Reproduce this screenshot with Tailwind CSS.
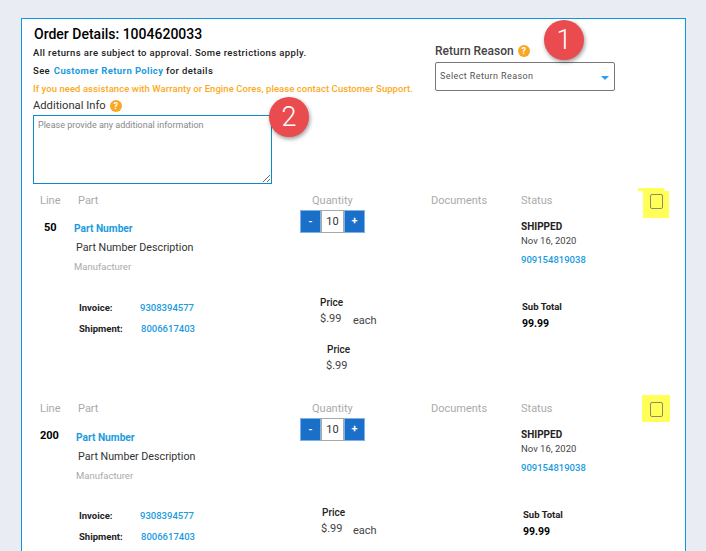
<!DOCTYPE html>
<html lang="en">
<head>
  <meta charset="UTF-8">
  <title>Order Details</title>
  <script src="https://cdn.jsdelivr.net/npm/@tailwindcss/browser@4"></script>
</head>
<body class="bg-[#e9edf3] h-[551px] overflow-hidden font-['Roboto',sans-serif] text-[#222]">
  <div class="relative ml-[21px] mt-[18px] w-[665px] h-[540px] bg-white border border-[#0b98de] border-b-0">

    <!-- top section -->
    <div class="flex h-[171px]">
      <div class="w-[413px] pl-[11px] shrink-0">
        <h1 class="mt-[7px] ml-[1px] text-[14px] leading-[17px] font-medium text-black">Order Details: 1004620033</h1>
        <p class="mt-[3px] text-[9.5px] leading-[14px] font-medium tracking-[0.38px]">All returns are subject to approval. Some restrictions apply.</p>
        <p class="mt-[4px] text-[9.5px] leading-[14px] font-medium tracking-[0.38px]">See <a class="ml-[1px] text-[#1a9be0] font-bold">Customer Return Policy</a> for details</p>
        <p class="mt-[4px] text-[9.5px] leading-[14px] font-medium tracking-[0.06px] text-[#fbaa1c] whitespace-nowrap">If you need assistance with Warranty or Engine Cores, please contact Customer Support.</p>
        <div class="mt-[2px] flex items-center gap-[4px] text-[11.2px] leading-[16px] text-[#333]">
          Additional Info
          <span class="w-[12px] h-[12px] rounded-full bg-[#f9a825] text-white text-[9px] leading-[12px] font-bold text-center">?</span>
        </div>
        <textarea rows="4" placeholder="Please provide any additional information" class="block mt-[1px] w-[239px] h-[69px] border border-[#0f8ac9] px-[4px] pt-[3px] text-[9px] leading-[12px] placeholder:text-[#888] outline-none"></textarea>
      </div>
      <div class="pt-[24px]">
        <div class="flex items-center gap-[4px] text-[12px] leading-[16px] font-medium text-[#444]">
          Return Reason
          <span class="w-[12px] h-[12px] rounded-full bg-[#f9a825] text-white text-[9px] leading-[12px] font-bold text-center">?</span>
        </div>
        <div class="mt-[3px] w-[180px] h-[29px] border border-[#777] rounded-[2px] flex items-center justify-between pl-[4px] pr-[5px] text-[9px] text-[#555] tracking-[0.4px]">
          Select Return Reason
          <span class="w-0 h-0 mt-[2px] border-x-[4px] border-x-transparent border-t-[4px] border-t-[#2a9df4]"></span>
        </div>
      </div>
    </div>

    <!-- line 50 -->
    <section class="flex h-[208px] text-[12px]">
      <div class="w-[278px] shrink-0">
        <div class="flex text-[#aaa] text-[11px] leading-[16px] pl-[18px] pt-[3px]"><span class="w-[38px]">Line</span><span>Part</span></div>
        <div class="flex mt-[12px]">
          <span class="w-[52px] pl-[22px] text-[11px] leading-[14px] font-bold text-black">50</span>
          <div class="mt-[1px]">
            <a class="block text-[10.2px] leading-[14px] font-bold text-[#1a9be0]">Part Number</a>
            <p class="mt-[5px] ml-[2px] text-[10.7px] leading-[14px] text-[#333]">Part Number Description</p>
            <p class="mt-[6px] text-[9.5px] leading-[12px] text-[#aaa]">Manufacturer</p>
          </div>
        </div>
        <div class="mt-[28px] ml-[57px] grid grid-cols-[61px_1fr] gap-y-[7px] text-[9.5px] leading-[14px]">
          <span class="font-bold">Invoice:</span><a class="text-[#1a9be0] font-medium">9308394577</a>
          <span class="font-bold">Shipment:</span><a class="ml-[1px] text-[#1a9be0] font-medium">8006617403</a>
        </div>
      </div>
      <div class="w-[131px] shrink-0">
        <div class="pl-[12px] pt-[3px] text-[#aaa] text-[11px] leading-[16px]">Quantity</div>
        <div class="flex h-[23px] w-[65px] mt-[1px]">
          <button class="w-[21px] bg-[#1a6fc9] border border-[#7fb0e6] text-white text-[10px] font-bold">-</button>
          <span class="w-[23px] border border-[#aaa] text-[11px] leading-[21px] text-center text-[#333]">10</span>
          <button class="w-[21px] bg-[#1a6fc9] border border-[#7fb0e6] text-white text-[11px] font-bold">+</button>
        </div>
        <div class="mt-[63px] ml-[20px] text-[10px] leading-[14px] font-medium">Price</div>
        <div class="mt-[2px] ml-[20px] flex text-[11px] leading-[14px] text-[#444]"><span class="w-[33px]">$.99</span><span class="mt-[2px]">each</span></div>
        <div class="mt-[15px] ml-[27px] text-[10px] leading-[14px] font-medium">Price</div>
        <div class="mt-[2px] ml-[26px] text-[11px] leading-[14px] text-[#444]">$.99</div>
      </div>
      <div class="w-[90px] shrink-0 pt-[3px] text-[#aaa] text-[11px] leading-[16px]">Documents</div>
      <div class="w-[120px] shrink-0">
        <div class="pt-[3px] text-[#aaa] text-[11px] leading-[16px]">Status</div>
        <div class="mt-[11px] text-[10px] leading-[14px] font-bold text-[#222]">SHIPPED</div>
        <div class="text-[9.5px] leading-[14px] text-[#444]">Nov 16, 2020</div>
        <a class="block mt-[5px] text-[9.5px] leading-[14px] text-[#1a9be0] font-medium">909154819038</a>
        <div class="mt-[33px] ml-[1px] text-[9.5px] leading-[14px] font-bold">Sub Total</div>
        <div class="mt-[3px] ml-[1px] text-[10.5px] leading-[14px] font-bold text-black">99.99</div>
      </div>
      <div class="relative w-[26px] h-[27px] mt-[1px] ml-[2px] bg-[#ffff57] pl-[7px] pt-[3px]">
        <span class="absolute -top-[3px] -left-[5px] w-[26px] h-[3px] bg-[#ffff57]"></span>
        <span class="block w-[13px] h-[15px] rounded-[2px] border-[1.5px] border-[#8a8a70]"></span>
      </div>
    </section>

    <!-- line 200 -->
    <section class="flex h-[160px] text-[12px]">
      <div class="w-[278px] shrink-0">
        <div class="flex text-[#aaa] text-[11px] leading-[16px] pl-[18px] pt-[3px]"><span class="w-[38px]">Line</span><span>Part</span></div>
        <div class="flex mt-[12px]">
          <span class="w-[54px] pl-[18px] text-[11px] leading-[14px] font-bold text-black">200</span>
          <div class="mt-[2px]">
            <a class="block text-[10.2px] leading-[14px] font-bold text-[#1a9be0]">Part Number</a>
            <p class="mt-[5px] ml-[2px] text-[10.7px] leading-[14px] text-[#333]">Part Number Description</p>
            <p class="mt-[6px] text-[9.5px] leading-[12px] text-[#aaa]">Manufacturer</p>
          </div>
        </div>
        <div class="mt-[27px] ml-[57px] grid grid-cols-[61px_1fr] gap-y-[7px] text-[9.5px] leading-[14px]">
          <span class="font-bold">Invoice:</span><a class="text-[#1a9be0] font-medium">9308394577</a>
          <span class="font-bold">Shipment:</span><a class="ml-[1px] text-[#1a9be0] font-medium">8006617403</a>
        </div>
      </div>
      <div class="w-[131px] shrink-0">
        <div class="pl-[12px] pt-[3px] text-[#aaa] text-[11px] leading-[16px]">Quantity</div>
        <div class="flex h-[23px] w-[65px] mt-[1px]">
          <button class="w-[21px] bg-[#1a6fc9] border border-[#7fb0e6] text-white text-[10px] font-bold">-</button>
          <span class="w-[23px] border border-[#aaa] text-[11px] leading-[21px] text-center text-[#333]">10</span>
          <button class="w-[21px] bg-[#1a6fc9] border border-[#7fb0e6] text-white text-[11px] font-bold">+</button>
        </div>
        <div class="mt-[65px] ml-[22px] text-[10px] leading-[14px] font-medium">Price</div>
        <div class="mt-[2px] ml-[21px] flex text-[11px] leading-[14px] text-[#444]"><span class="w-[32px]">$.99</span><span class="mt-[2px]">each</span></div>
      </div>
      <div class="w-[90px] shrink-0 pt-[3px] text-[#aaa] text-[11px] leading-[16px]">Documents</div>
      <div class="w-[120px] shrink-0">
        <div class="pt-[3px] text-[#aaa] text-[11px] leading-[16px]">Status</div>
        <div class="mt-[11px] text-[10px] leading-[14px] font-bold text-[#222]">SHIPPED</div>
        <div class="text-[9.5px] leading-[14px] text-[#444]">Nov 16, 2020</div>
        <a class="block mt-[5px] text-[9.5px] leading-[14px] text-[#1a9be0] font-medium">909154819038</a>
        <div class="mt-[33px] ml-[2px] text-[9.5px] leading-[14px] font-bold">Sub Total</div>
        <div class="mt-[3px] ml-[2px] text-[10.5px] leading-[14px] font-bold text-black">99.99</div>
      </div>
      <div class="w-[28px] h-[27px] -mt-[3px] ml-[1px] bg-[#ffff57] pl-[8px] pt-[7px]">
        <span class="block w-[13px] h-[15px] rounded-[2px] border-[1.5px] border-[#8a8a70]"></span>
      </div>
    </section>

    <!-- numbered callouts -->
    <div class="absolute left-[522px] top-[1px] w-[40px] h-[40px] rounded-full bg-[#e94b4e] shadow-[1px_2px_4px_rgba(0,0,0,0.4)] text-white text-[27px] font-light leading-[40px] text-center">1</div>
    <div class="absolute left-[247px] top-[78px] w-[40px] h-[40px] rounded-full bg-[#e94b4e] shadow-[1px_2px_4px_rgba(0,0,0,0.4)] text-white text-[27px] font-light leading-[40px] text-center">2</div>
  </div>
</body>
</html>
